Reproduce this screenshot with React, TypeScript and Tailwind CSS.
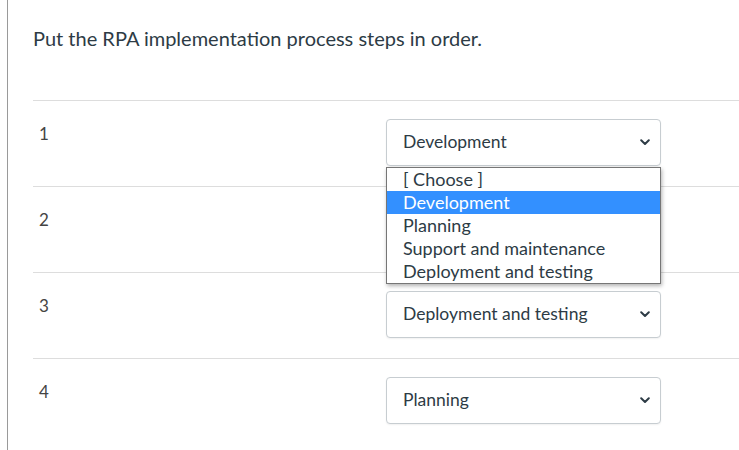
const options = ['[ Choose ]', 'Development', 'Planning', 'Support and maintenance', 'Deployment and testing'];

// row 2's select sits under the open list, so its value never shows
const rows = [
  { n: 1, value: 'Development' },
  { n: 2, value: '' },
  { n: 3, value: 'Deployment and testing' },
  { n: 4, value: 'Planning' },
];

function Chevron() {
  return (
    <svg width="10" height="7" viewBox="0 0 10 7" fill="none" className="shrink-0">
      <path d="M1.2 1.3 L5 5 L8.8 1.3" stroke="#2d3b45" strokeWidth="2" strokeLinecap="round" strokeLinejoin="round" />
    </svg>
  );
}

function FakeSelect({ value }: { value: string }) {
  return (
    <div className="flex h-[47px] w-[275px] items-center justify-between rounded-[4px] border border-[#c7cdd1] bg-white pl-[16px] pr-[10px] text-[17.5px] text-[#2d3b45] shadow-[0_1px_2px_rgba(0,0,0,0.06)]">
      <span>{value}</span>
      <Chevron />
    </div>
  );
}

export default function App() {
  return (
    <div className="relative h-[450px] w-[739px] overflow-hidden bg-white font-['Lato','Noto_Sans',sans-serif] text-[#2d3b45]">
      <div className="ml-[7px] h-full border-l border-[#9a9a9a] pl-[25px]">
        <h1 className="pt-[24px] pb-[48px] text-[20px] leading-[28px] font-normal">
          Put the RPA implementation process steps in order.
        </h1>

        {rows.map((r) => (
          <div key={r.n} className="flex h-[86px] border-t border-[#dddddd]">
            <div className="w-[353px] pl-[6px] pt-[23px] text-[17px] leading-[20px] text-[#444]">{r.n}</div>
            <div className="pt-[18px]">
              <FakeSelect value={r.value} />
            </div>
          </div>
        ))}
      </div>

      <ul className="absolute left-[386px] top-[167px] w-[275px] border border-[#767676] bg-white text-[18px] leading-[22px] text-[#2d3b45] shadow-[1px_2px_4px_rgba(0,0,0,0.3)]">
        {options.map((o) => (
          <li
            key={o}
            className={o === 'Development' ? 'h-[23px] bg-[#3390ff] pl-[16px] text-white' : 'h-[23px] pl-[16px]'}
          >
            {o}
          </li>
        ))}
      </ul>
    </div>
  );
}
